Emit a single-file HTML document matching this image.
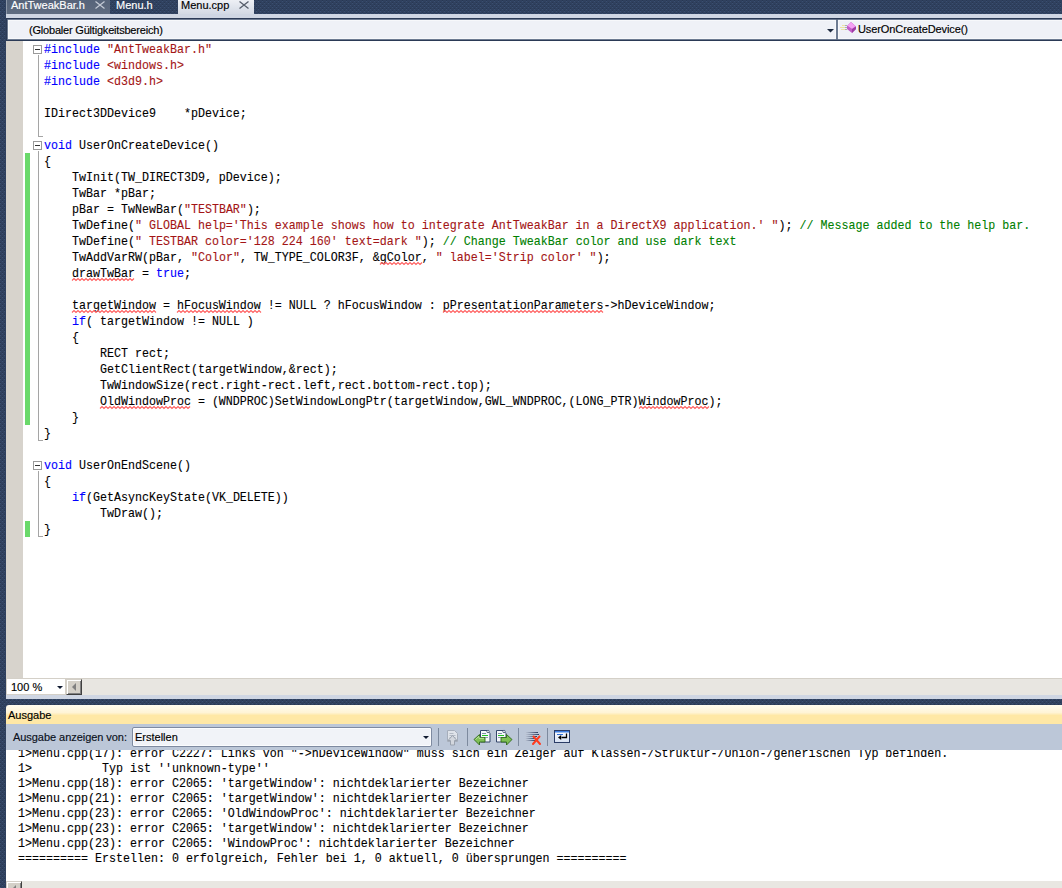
<!DOCTYPE html>
<html><head><meta charset="utf-8">
<style>
*{margin:0;padding:0;box-sizing:border-box}
html,body{width:1062px;height:888px;overflow:hidden}
body{position:relative;background-color:#2c3c5a;font-family:"Liberation Sans",sans-serif}
.a{position:absolute}
.ui{font-family:"Liberation Sans",sans-serif;font-size:11px;white-space:pre;line-height:13px;-webkit-text-stroke:0.15px}
.code{position:absolute;left:44px;top:42px;font-family:"Liberation Mono",monospace;font-size:11.67px;line-height:16px;color:#000;-webkit-text-stroke:0.1px}
.code div{height:16px;white-space:pre;transform:scaleY(1.06);transform-origin:0 11px}
.k{color:#0000ff}
.s{color:#a31515}
.c{color:#008000}
.out{position:absolute;left:12px;top:-3px;font-family:"Liberation Mono",monospace;font-size:11.67px;line-height:15px;color:#000;-webkit-text-stroke:0.1px}
.out div{height:15px;white-space:pre;transform:scaleY(1.06);transform-origin:0 10px}
</style></head><body>

<svg class="a" style="left:0;top:0" width="1062" height="888"><defs><pattern id="bg" width="4" height="4" patternUnits="userSpaceOnUse"><rect width="4" height="4" fill="#30415f"/><rect x="2" y="0" width="1" height="1" fill="#283853"/><rect x="2" y="1" width="1" height="1" fill="#3a4f71"/><rect x="0" y="2" width="1" height="1" fill="#283853"/><rect x="0" y="3" width="1" height="1" fill="#3a4f71"/></pattern></defs><rect width="1062" height="888" fill="url(#bg)"/></svg>
<!-- tabs -->
<div class="a" style="left:6px;top:0;width:104px;height:14px;background:linear-gradient(#56647a,#5f6c80);border-left:1px solid #8c97a8"></div>
<div class="a ui" style="left:11px;top:-1px;color:#fff">AntTweakBar.h</div>
<svg class="a" style="left:95px;top:1px" width="10" height="8"><path d="M0.5 0.5L9.5 7.5M9.5 0.5L0.5 7.5" stroke="#c3cad5" stroke-width="1.2"/></svg>
<div class="a ui" style="left:116px;top:-1px;color:#fff">Menu.h</div>
<div class="a" style="left:178px;top:0;width:76px;height:14px;background:linear-gradient(#eef0f5,#d3d9e4)"></div>
<div class="a ui" style="left:181px;top:-1px;color:#000">Menu.cpp</div>
<svg class="a" style="left:239px;top:1px" width="10" height="8"><path d="M0.5 0.5L9.5 7.5M9.5 0.5L0.5 7.5" stroke="#585f6c" stroke-width="1.3"/></svg>

<!-- light strip -->
<div class="a" style="left:6px;top:14px;width:1056px;height:4px;background:#cfd6e3"></div>
<!-- combo bar -->
<div class="a" style="left:6px;top:18px;width:1056px;height:23px;background:#2b3a56"></div>
<div class="a" style="left:7px;top:19px;width:830px;height:21px;background:#eff1f7;border:1px solid #6d7b92;box-shadow:inset 0 0 0 1px #f7f8fb;border-radius:1px"></div>
<div class="a" style="left:837px;top:19px;width:240px;height:21px;background:#eff1f7;border:1px solid #6d7b92;box-shadow:inset 0 0 0 1px #f7f8fb;border-radius:1px"></div>
<div class="a ui" style="left:29px;top:24px;color:#000;letter-spacing:-0.2px">(Globaler Gültigkeitsbereich)</div>
<svg class="a" style="left:827px;top:29px" width="7" height="4"><path d="M0 0h7L3.5 3.5z" fill="#1e2b40"/></svg>
<svg class="a" style="left:840px;top:21px" width="18" height="13">
 <rect x="2" y="4" width="4" height="1" fill="#ece4a4"/><rect x="5" y="4" width="2" height="1" fill="#a9aeb2"/>
 <rect x="0" y="6" width="5" height="1" fill="#ece4a4"/><rect x="5" y="6" width="2" height="1" fill="#a9aeb2"/>
 <rect x="1" y="8" width="4" height="1" fill="#ece4a4"/><rect x="5" y="8" width="2" height="1" fill="#a9aeb2"/>
 <path d="M11 1L16 5.5L16 8L12 12L7 8L7 5z" fill="#c25cc8"/>
 <path d="M12 8L16 5.5L16 8L12 12z" fill="#9c3ca4"/>
 <path d="M11 1.2L15.6 5.3L12 7.8L7.4 4.8z" fill="#f4a0f4"/>
</svg>
<div class="a ui" style="left:858px;top:23px;color:#000;letter-spacing:-0.1px">UserOnCreateDevice()</div>

<!-- editor -->
<div class="a" style="left:6px;top:41px;width:17px;height:637px;background:#d7d3cc"></div>
<div class="a" style="left:23px;top:41px;width:1039px;height:637px;background:#fff"></div>

<!-- change bars -->
<div class="a" style="left:25px;top:153px;width:5px;height:272px;background:#6ad96a"></div>
<div class="a" style="left:25px;top:521px;width:5px;height:16px;background:#6ad96a"></div>

<!-- outlining -->
<div class="a" style="left:33px;top:45px;width:9px;height:9px;border:1px solid #9a9a9a;background:#fff"></div>
<div class="a" style="left:35px;top:49px;width:5px;height:1px;background:#333"></div>
<div class="a" style="left:38px;top:55px;width:1px;height:82px;background:#a5a5a5"></div>
<div class="a" style="left:38px;top:136px;width:5px;height:1px;background:#a5a5a5"></div>

<div class="a" style="left:33px;top:141px;width:9px;height:9px;border:1px solid #9a9a9a;background:#fff"></div>
<div class="a" style="left:35px;top:145px;width:5px;height:1px;background:#333"></div>
<div class="a" style="left:38px;top:151px;width:1px;height:290px;background:#a5a5a5"></div>
<div class="a" style="left:38px;top:440px;width:5px;height:1px;background:#a5a5a5"></div>

<div class="a" style="left:33px;top:461px;width:9px;height:9px;border:1px solid #9a9a9a;background:#fff"></div>
<div class="a" style="left:35px;top:465px;width:5px;height:1px;background:#333"></div>
<div class="a" style="left:38px;top:471px;width:1px;height:66px;background:#a5a5a5"></div>
<div class="a" style="left:38px;top:536px;width:5px;height:1px;background:#a5a5a5"></div>

<div class="code">
<div><span class="k">#include</span> <span class="s">"AntTweakBar.h"</span></div>
<div><span class="k">#include</span> <span class="s">&lt;windows.h&gt;</span></div>
<div><span class="k">#include</span> <span class="s">&lt;d3d9.h&gt;</span></div>
<div></div>
<div>IDirect3DDevice9    *pDevice;</div>
<div></div>
<div><span class="k">void</span> UserOnCreateDevice()</div>
<div>{</div>
<div>    TwInit(TW_DIRECT3D9, pDevice);</div>
<div>    TwBar *pBar;</div>
<div>    pBar = TwNewBar(<span class="s">"TESTBAR"</span>);</div>
<div>    TwDefine(<span class="s">" GLOBAL help='This example shows how to integrate AntTweakBar in a DirectX9 application.' "</span>); <span class="c">// Message added to the help bar.</span></div>
<div>    TwDefine(<span class="s">" TESTBAR color='128 224 160' text=dark "</span>); <span class="c">// Change TweakBar color and use dark text</span></div>
<div>    TwAddVarRW(pBar, <span class="s">"Color"</span>, TW_TYPE_COLOR3F, &amp;gColor, <span class="s">" label='Strip color' "</span>);</div>
<div>    drawTwBar = <span class="k">true</span>;</div>
<div></div>
<div>    targetWindow = hFocusWindow != NULL ? hFocusWindow : pPresentationParameters-&gt;hDeviceWindow;</div>
<div>    <span class="k">if</span>( targetWindow != NULL )</div>
<div>    {</div>
<div>        RECT rect;</div>
<div>        GetClientRect(targetWindow,&amp;rect);</div>
<div>        TwWindowSize(rect.right-rect.left,rect.bottom-rect.top);</div>
<div>        OldWindowProc = (WNDPROC)SetWindowLongPtr(targetWindow,GWL_WNDPROC,(LONG_PTR)WindowProc);</div>
<div>    }</div>
<div>}</div>
<div></div>
<div><span class="k">void</span> UserOnEndScene()</div>
<div>{</div>
<div>    <span class="k">if</span>(GetAsyncKeyState(VK_DELETE))</div>
<div>        TwDraw();</div>
<div>}</div>
</div>

<svg class="a" style="left:0;top:0" width="1062" height="888"><path d="M380 264.5 L382 262.5 L384 264.5 L386 262.5 L388 264.5 L390 262.5 L392 264.5 L394 262.5 L396 264.5 L398 262.5 L400 264.5 L402 262.5 L404 264.5 L406 262.5 L408 264.5 L410 262.5 L412 264.5 L414 262.5 L416 264.5 L418 262.5 L420 264.5 L422 262.5 M72 280.5 L74 278.5 L76 280.5 L78 278.5 L80 280.5 L82 278.5 L84 280.5 L86 278.5 L88 280.5 L90 278.5 L92 280.5 L94 278.5 L96 280.5 L98 278.5 L100 280.5 L102 278.5 L104 280.5 L106 278.5 L108 280.5 L110 278.5 L112 280.5 L114 278.5 L116 280.5 L118 278.5 L120 280.5 L122 278.5 L124 280.5 L126 278.5 L128 280.5 L130 278.5 L132 280.5 L134 278.5 M72 312.5 L74 310.5 L76 312.5 L78 310.5 L80 312.5 L82 310.5 L84 312.5 L86 310.5 L88 312.5 L90 310.5 L92 312.5 L94 310.5 L96 312.5 L98 310.5 L100 312.5 L102 310.5 L104 312.5 L106 310.5 L108 312.5 L110 310.5 L112 312.5 L114 310.5 L116 312.5 L118 310.5 L120 312.5 L122 310.5 L124 312.5 L126 310.5 L128 312.5 L130 310.5 L132 312.5 L134 310.5 L136 312.5 L138 310.5 L140 312.5 L142 310.5 L144 312.5 L146 310.5 L148 312.5 L150 310.5 L152 312.5 L154 310.5 L156 312.5 M177 312.5 L179 310.5 L181 312.5 L183 310.5 L185 312.5 L187 310.5 L189 312.5 L191 310.5 L193 312.5 L195 310.5 L197 312.5 L199 310.5 L201 312.5 L203 310.5 L205 312.5 L207 310.5 L209 312.5 L211 310.5 L213 312.5 L215 310.5 L217 312.5 L219 310.5 L221 312.5 L223 310.5 L225 312.5 L227 310.5 L229 312.5 L231 310.5 L233 312.5 L235 310.5 L237 312.5 L239 310.5 L241 312.5 L243 310.5 L245 312.5 L247 310.5 L249 312.5 L251 310.5 L253 312.5 L255 310.5 L257 312.5 L259 310.5 L261 312.5 M443 312.5 L445 310.5 L447 312.5 L449 310.5 L451 312.5 L453 310.5 L455 312.5 L457 310.5 L459 312.5 L461 310.5 L463 312.5 L465 310.5 L467 312.5 L469 310.5 L471 312.5 L473 310.5 L475 312.5 L477 310.5 L479 312.5 L481 310.5 L483 312.5 L485 310.5 L487 312.5 L489 310.5 L491 312.5 L493 310.5 L495 312.5 L497 310.5 L499 312.5 L501 310.5 L503 312.5 L505 310.5 L507 312.5 L509 310.5 L511 312.5 L513 310.5 L515 312.5 L517 310.5 L519 312.5 L521 310.5 L523 312.5 L525 310.5 L527 312.5 L529 310.5 L531 312.5 L533 310.5 L535 312.5 L537 310.5 L539 312.5 L541 310.5 L543 312.5 L545 310.5 L547 312.5 L549 310.5 L551 312.5 L553 310.5 L555 312.5 L557 310.5 L559 312.5 L561 310.5 L563 312.5 L565 310.5 L567 312.5 L569 310.5 L571 312.5 L573 310.5 L575 312.5 L577 310.5 L579 312.5 L581 310.5 L583 312.5 L585 310.5 L587 312.5 L589 310.5 L591 312.5 L593 310.5 L595 312.5 L597 310.5 L599 312.5 L601 310.5 L603 312.5 M100 408.5 L102 406.5 L104 408.5 L106 406.5 L108 408.5 L110 406.5 L112 408.5 L114 406.5 L116 408.5 L118 406.5 L120 408.5 L122 406.5 L124 408.5 L126 406.5 L128 408.5 L130 406.5 L132 408.5 L134 406.5 L136 408.5 L138 406.5 L140 408.5 L142 406.5 L144 408.5 L146 406.5 L148 408.5 L150 406.5 L152 408.5 L154 406.5 L156 408.5 L158 406.5 L160 408.5 L162 406.5 L164 408.5 L166 406.5 L168 408.5 L170 406.5 L172 408.5 L174 406.5 L176 408.5 L178 406.5 L180 408.5 L182 406.5 L184 408.5 L186 406.5 L188 408.5 L190 406.5 M639 408.5 L641 406.5 L643 408.5 L645 406.5 L647 408.5 L649 406.5 L651 408.5 L653 406.5 L655 408.5 L657 406.5 L659 408.5 L661 406.5 L663 408.5 L665 406.5 L667 408.5 L669 406.5 L671 408.5 L673 406.5 L675 408.5 L677 406.5 L679 408.5 L681 406.5 L683 408.5 L685 406.5 L687 408.5 L689 406.5 L691 408.5 L693 406.5 L695 408.5 L697 406.5 L699 408.5 L701 406.5 L703 408.5 L705 406.5 L707 408.5 L709 406.5" stroke="#ff5f5f" stroke-width="1.1" fill="none"/></svg>
<!-- bottom bar of editor -->
<div class="a" style="left:6px;top:678px;width:1056px;height:17px;background:#e8e6e1;border-top:1px solid #d4d0c8"></div>
<div class="a" style="left:6px;top:679px;width:60px;height:16px;background:#d4d0c8"></div>
<div class="a" style="left:7px;top:679px;width:58px;height:15px;background:#fff"></div>
<div class="a ui" style="left:11px;top:681px;color:#000">100 %</div>
<svg class="a" style="left:57px;top:686px" width="6" height="4"><path d="M0 0h6L3 3z" fill="#101a30"/></svg>
<div class="a" style="left:66px;top:679px;width:16px;height:16px;background:#d4d0c8;border-top:1px solid #d4d0c8;border-left:1px solid #d4d0c8;border-right:1px solid #404040;border-bottom:1px solid #404040;box-shadow:inset 1px 1px #fff,inset -1px -1px #808080"></div>
<svg class="a" style="left:72px;top:683px" width="5" height="8"><path d="M4 0v8L0 4z" fill="#808080"/></svg>
<div class="a" style="left:6px;top:695px;width:1056px;height:4px;background:#cfd6e3"></div>

<!-- output panel -->
<div class="a" style="left:6px;top:705px;width:1056px;height:19px;background:linear-gradient(#fffcf0 0%,#fff4d6 40%,#ffe8a6 55%,#ffe8a6 100%);border-top-left-radius:3px"></div>
<div class="a ui" style="left:8px;top:709px;color:#000">Ausgabe</div>
<div class="a" style="left:6px;top:724px;width:1056px;height:26px;background:#bcc7d8"></div>
<div class="a ui" style="left:13px;top:731px;color:#0a1020;letter-spacing:-0.05px">Ausgabe anzeigen von:</div>
<div class="a" style="left:132px;top:727px;width:300px;height:20px;background:#f1f3f8;border:1px solid #7e8aa0;border-radius:2px;box-shadow:inset 0 0 0 1px #fbfcfe"></div>
<div class="a ui" style="left:135px;top:731px;color:#000">Erstellen</div>
<svg class="a" style="left:423px;top:736px" width="6" height="3"><path d="M0 0h6L3 3z" fill="#101a30"/></svg>
<svg class="a" style="left:430px;top:724px" width="150" height="25">
 <rect x="8" y="4" width="1" height="18" fill="#7d8a9e"/>
 <rect x="37" y="4" width="1" height="18" fill="#7d8a9e"/>
 <rect x="88" y="4" width="1" height="18" fill="#7d8a9e"/>
 <rect x="117" y="4" width="1" height="18" fill="#7d8a9e"/>
 <!-- icon1 disabled -->
 <path d="M17.5 6.5h7l3 3v8h-10z" fill="#dfe3ea" stroke="#a6aebb"/>
 <path d="M19.5 9.5h4M19.5 11.5h6M19.5 13.5h6" stroke="#b3bac5"/>
 <path d="M22.5 11.5l4.5 5h-2.5v4.5h-4v-4.5h-2.5z" fill="#d3d7de" stroke="#9aa2ae"/>
 <!-- icon2 -->
 <path d="M50.5 6.5h6.5l3 3v8.5h-9.5z" fill="#f6f8fb" stroke="#34476a"/>
 <circle cx="58" cy="7.5" r="1.2" fill="#fff" stroke="#34476a" stroke-width="0.8"/>
 <path d="M52 9.5h4" stroke="#7f8ea6"/><path d="M52 11.5h6" stroke="#22c422"/><path d="M52 13.5h6" stroke="#8d9ab0"/>
 <path d="M44 15.5l5.5-5v3h5.5v4.5h-5.5v3z" fill="#7fbf55" stroke="#2f6a1a" stroke-width="0.9"/>
 <path d="M45.5 15.5l3.5-3.2v2h5" stroke="#c8eeb0" stroke-width="0.8" fill="none"/>
 <!-- icon3 -->
 <path d="M66.5 6.5h6.5l3 3v8.5h-9.5z" fill="#f6f8fb" stroke="#34476a"/>
 <circle cx="74" cy="7.5" r="1.2" fill="#fff" stroke="#34476a" stroke-width="0.8"/>
 <path d="M68 9.5h4" stroke="#7f8ea6"/><path d="M68 11.5h6" stroke="#22c422"/><path d="M68 13.5h6" stroke="#8d9ab0"/>
 <path d="M82 15.5l-5.5-5v3h-5.5v4.5h5.5v3z" fill="#7fbf55" stroke="#2f6a1a" stroke-width="0.9"/>
 <!-- icon4 -->
 <defs><linearGradient id="lg" x1="0" x2="1"><stop offset="0" stop-color="#c3cbd9"/><stop offset="1" stop-color="#2d3f62"/></linearGradient></defs>
 <rect x="95" y="8" width="13" height="1" fill="url(#lg)"/>
 <rect x="95" y="10" width="14" height="1" fill="url(#lg)"/>
 <rect x="95" y="12" width="12" height="1" fill="url(#lg)"/>
 <rect x="95" y="14" width="10" height="1" fill="url(#lg)"/>
 <rect x="95" y="16" width="10" height="1" fill="url(#lg)"/>
 <path d="M103.5 12.5l6.5 7.5M109.5 12.5l-6.5 7.5" stroke="#ff3b1f" stroke-width="2" stroke-linecap="round"/>
 <!-- icon5 -->
 <defs><linearGradient id="wg" x1="0" y1="0" x2="0" y2="1"><stop offset="0" stop-color="#ffffff"/><stop offset="1" stop-color="#d6e0f2"/></linearGradient></defs>
 <rect x="124.5" y="6.5" width="15" height="12" fill="url(#wg)" stroke="#2a3c66"/>
 <rect x="125" y="7" width="14" height="1.5" fill="#3d7de0"/>
 <path d="M127 10.5h6" stroke="#2f6fd6"/>
 <path d="M136.5 9.5v4h-5" stroke="#000" stroke-width="1.3" fill="none"/>
 <path d="M128 13.5l3.2-2.6v5.2z" fill="#000"/>
</svg>

<div class="a" style="left:6px;top:750px;width:1056px;height:131px;background:#fff;overflow:hidden">
<div class="out"><div>1&gt;Menu.cpp(17): error C2227: Links von "-&gt;hDeviceWindow" muss sich ein Zeiger auf Klassen-/Struktur-/Union-/generischen Typ befinden.</div><div>1&gt;          Typ ist ''unknown-type''</div><div>1&gt;Menu.cpp(18): error C2065: 'targetWindow': nichtdeklarierter Bezeichner</div><div>1&gt;Menu.cpp(21): error C2065: 'targetWindow': nichtdeklarierter Bezeichner</div><div>1&gt;Menu.cpp(23): error C2065: 'OldWindowProc': nichtdeklarierter Bezeichner</div><div>1&gt;Menu.cpp(23): error C2065: 'targetWindow': nichtdeklarierter Bezeichner</div><div>1&gt;Menu.cpp(23): error C2065: 'WindowProc': nichtdeklarierter Bezeichner</div><div>========== Erstellen: 0 erfolgreich, Fehler bei 1, 0 aktuell, 0 übersprungen ==========</div></div></div>

<div class="a" style="left:6px;top:881px;width:1056px;height:7px;background:#e9e7e2"></div>
<div class="a" style="left:6px;top:881px;width:16px;height:16px;background:#d4d0c8;border-top:1px solid #d4d0c8;border-left:1px solid #d4d0c8;border-right:1px solid #404040;box-shadow:inset 1px 1px #fff,inset -1px 0 #808080"></div>
<svg class="a" style="left:12px;top:885px" width="5" height="8"><path d="M4 0v8L0 4z" fill="#808080"/></svg>

</body></html>
